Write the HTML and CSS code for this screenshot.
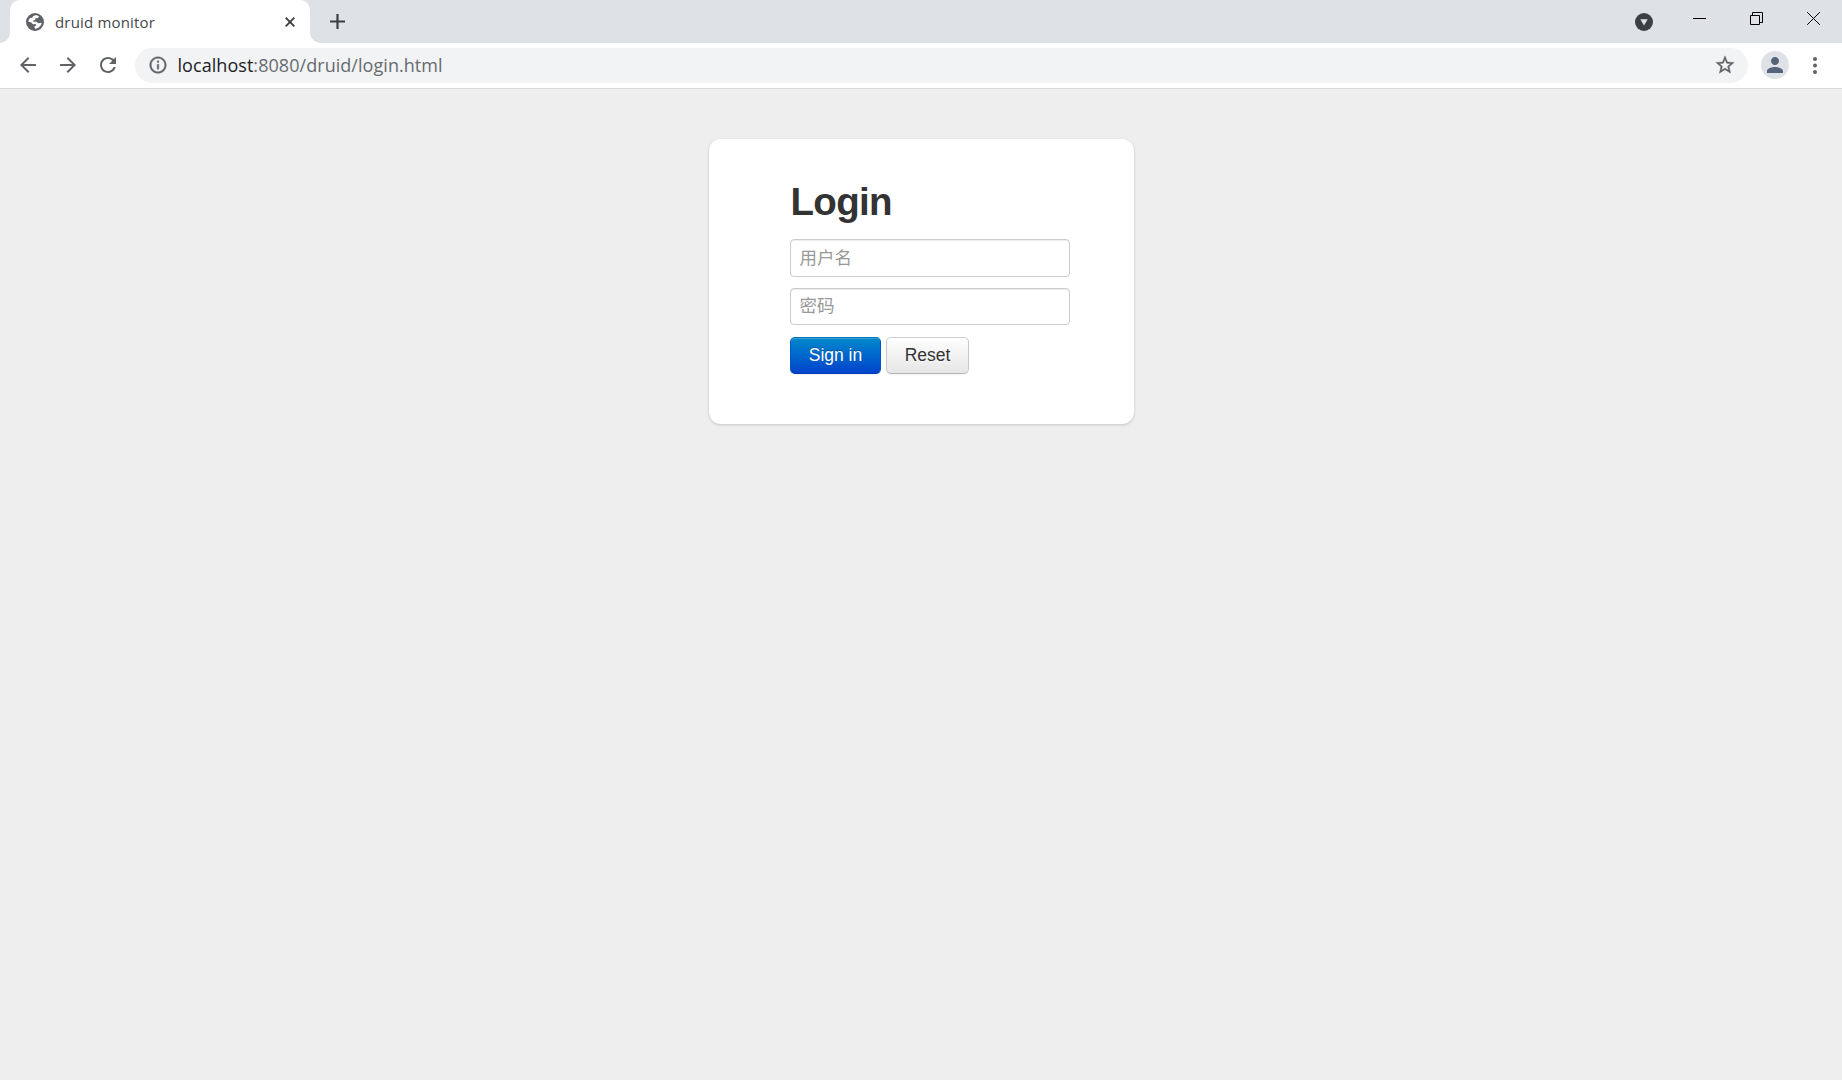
FILE: index.html
```
<!DOCTYPE html>
<html lang="zh-CN">
<head>
    <meta charset="UTF-8">
    <title>druid monitor</title>
    <link rel="stylesheet" href="styles.css">
</head>
<body>
    <div class="tab-strip">
        <div class="tab">
            <svg class="favicon" viewBox="0 0 18 18">
                <circle cx="9" cy="9" r="9" fill="#5f6368"/>
                <path d="M9.500 2.300C11 2.300 12.300 2.800 13 3.500L11.800 5 9.500 5.300 9.200 7 7.300 7.600 7.500 8.800 10.500 8.800 12.300 10.200 15.600 9.800C15.200 13 12.500 15.500 9.400 15.800L8.500 15 8.700 13.200 10.300 12.200 9.500 11 7 11.200 5 9.300 2.300 8.700C2.500 7 3.300 5.800 4.200 4.900L6.200 4.800 7.300 3Z" fill="#fff"/>
            </svg>
            <span class="tab-title">druid monitor</span>
            <svg class="tab-close" viewBox="0 0 10 10"><path d="M.7.7l8.600 8.600M9.300.7L.7 9.300"/></svg>
        </div>
        <svg class="new-tab" viewBox="0 0 15 15"><path d="M7.500 0v15M0 7.500h15"/></svg>
        <div class="window-controls">
            <svg class="tab-search" viewBox="0 0 18 18"><circle cx="9" cy="9" r="9" fill="#3c4043"/><path d="M5.300 6.300h7.400L9 12.500z" fill="#dee1e6"/></svg>
            <svg class="win-icon minimize" viewBox="0 0 13 13"><path d="M0 6.500h13"/></svg>
            <svg class="win-icon restore" viewBox="0 0 13 13"><path d="M.5 3.500h9v9h-9zM2.500 3.500v-3h10v10h-3"/></svg>
            <svg class="win-icon close" viewBox="0 0 13 13"><path d="M.2.2l12.600 12.600M12.800.2L.2 12.800"/></svg>
        </div>
    </div>

    <div class="toolbar">
        <svg class="nav-icon" viewBox="0 0 24 24"><path d="M20 11H7.830l5.590-5.590L12 4l-8 8 8 8 1.410-1.410L7.830 13H20v-2z"/></svg>
        <svg class="nav-icon" viewBox="0 0 24 24"><path d="M12 4l-1.410 1.410L16.170 11H4v2h12.170l-5.580 5.590L12 20l8-8z"/></svg>
        <svg class="nav-icon" viewBox="0 0 24 24"><path d="M17.650 6.350C16.200 4.900 14.210 4 12 4c-4.420 0-7.990 3.580-7.990 8s3.570 8 7.990 8c3.730 0 6.840-2.550 7.730-6h-2.080c-.82 2.330-3.040 4-5.650 4-3.310 0-6-2.690-6-6s2.690-6 6-6c1.660 0 3.140.69 4.220 1.780L13 11h7V4l-2.350 2.350z"/></svg>
        <div class="address-bar">
            <svg class="info-icon" viewBox="0 0 24 24"><path d="M11 7h2v2h-2zm0 4h2v6h-2zm1-9C6.480 2 2 6.480 2 12s4.480 10 10 10 10-4.480 10-10S17.520 2 12 2zm0 18c-4.410 0-8-3.590-8-8s3.590-8 8-8 8 3.590 8 8-3.590 8-8 8z"/></svg>
            <span class="url"><span class="host">localhost</span>:8080/druid/login.html</span>
            <svg class="star" viewBox="0 0 24 24"><path d="M22 9.240l-7.190-.62L12 2 9.190 8.630 2 9.240l5.460 4.730L5.820 21 12 17.270 18.180 21l-1.630-7.030L22 9.240zM12 15.400l-3.760 2.270 1-4.280-3.320-2.880 4.380-.38L12 6.100l1.710 4.040 4.380.38-3.320 2.880 1 4.280L12 15.400z"/></svg>
        </div>
        <div class="avatar">
            <svg viewBox="0 0 24 24"><path d="M12 12c2.210 0 4-1.790 4-4s-1.790-4-4-4-4 1.790-4 4 1.790 4 4 4zm0 2c-2.670 0-8 1.340-8 4v2h16v-2c0-2.660-5.330-4-8-4z"/></svg>
        </div>
        <svg class="menu" viewBox="0 0 4 17"><circle cx="2" cy="2" r="2"/><circle cx="2" cy="8.500" r="2"/><circle cx="2" cy="15" r="2"/></svg>
    </div>

    <div class="container">
        <form class="form-signin">
            <h2>Login</h2>
            <input type="text" class="username" placeholder="用户名">
            <input type="password" placeholder="密码">
            <div class="actions">
                <button type="button" class="btn btn-primary">Sign in</button>
                <button type="reset" class="btn">Reset</button>
            </div>
        </form>
    </div>
</body>
</html>
```
FILE: styles.css
```
* {
    box-sizing: border-box;
}
body {
    margin: 0;
    height: 100vh;
    overflow: hidden;
    background-color: #eee;
    font-family: "Liberation Sans", "Noto Sans CJK SC", sans-serif;
}
svg {
    display: block;
    flex: none;
}

/* tab strip */
.tab-strip {
    display: flex;
    height: 43px;
    padding-left: 10px;
    background-color: #dee1e6;
}
.tab {
    position: relative;
    display: flex;
    align-items: center;
    width: 300px;
    padding: 0 15px 0 16px;
    background-color: #fff;
    border-radius: 10px 10px 0 0;
}
.tab::before,
.tab::after {
    content: "";
    position: absolute;
    bottom: 0;
    width: 10px;
    height: 10px;
}
.tab::before {
    left: -10px;
    background: radial-gradient(circle at 0 0, #dee1e6 9.5px, #fff 10px);
}
.tab::after {
    right: -10px;
    background: radial-gradient(circle at 100% 0, #dee1e6 9.5px, #fff 10px);
}
.favicon {
    width: 18px;
    height: 18px;
}
.tab-title {
    flex: 1;
    margin: 1px 0 0 11px;
    font-family: "Open Sans", sans-serif;
    font-size: 15px;
    letter-spacing: .18px;
    color: #45484c;
}
.tab-close {
    width: 10px;
    height: 10px;
    stroke: #3c4043;
    stroke-width: 1.9;
}
.new-tab {
    width: 15px;
    height: 15px;
    margin: 14px 0 0 20px;
    stroke: #3c4043;
    stroke-width: 2.2;
}
.window-controls {
    display: flex;
    margin-left: auto;
    padding-right: 22px;
}
.tab-search {
    width: 18px;
    height: 18px;
    margin: 13px 40px 0 0;
}
.win-icon {
    width: 13px;
    height: 13px;
    margin-top: 12px;
    fill: none;
    stroke: #000;
    stroke-width: 1;
}
.restore,
.close {
    margin-left: 44px;
}

/* toolbar */
.toolbar {
    display: flex;
    align-items: center;
    height: 46px;
    padding: 1px 25px 2px 15.5px;
    background-color: #fff;
    border-bottom: 1px solid #d8d9db;
}
.nav-icon {
    width: 24px;
    height: 24px;
    margin-right: 16px;
    fill: #5f6368;
}
.address-bar {
    display: flex;
    flex: 1;
    align-items: center;
    height: 35px;
    margin-left: -.5px;
    padding: 0 12px;
    background-color: #f1f3f4;
    border-radius: 18px;
}
.info-icon {
    width: 20px;
    height: 20px;
    margin-left: .5px;
    fill: #5f6368;
    stroke: #5f6368;
    stroke-width: .4;
}
.url {
    flex: 1;
    margin-left: 10px;
    font-family: "Open Sans", sans-serif;
    font-size: 18px;
    letter-spacing: .05px;
    color: #686b6f;
}
.host {
    color: #202124;
}
.star {
    width: 22px;
    height: 22px;
    fill: #5f6368;
    stroke: #5f6368;
    stroke-width: .4;
}
.avatar {
    display: flex;
    align-items: center;
    justify-content: center;
    width: 28px;
    height: 28px;
    margin: 0 24px 0 13px;
    background-color: #dee1e6;
    border-radius: 50%;
}
.avatar svg {
    width: 24px;
    height: 24px;
    fill: #54627a;
}
.menu {
    width: 4px;
    height: 17px;
    fill: #5f6368;
}

/* login form */
.container {
    padding-top: 50px;
}
.form-signin {
    width: 425px;
    height: 285px;
    margin: 0 auto;
    padding: 38px 64px 0 81px;
    background-color: #fff;
    border-radius: 12px;
    box-shadow: 0 1px 3px rgba(0, 0, 0, .18);
}
.form-signin h2 {
    margin: 0 0 12px;
    font-size: 38.5px;
    line-height: 50px;
    letter-spacing: -.7px;
    text-indent: 1px;
    color: #333;
}
.form-signin input {
    display: block;
    width: 280px;
    height: 37px;
    margin-bottom: 12px;
    padding: 0 8px 0 9px;
    border: 1px solid #ccc;
    border-radius: 4px;
    box-shadow: inset 0 1px 1px rgba(0, 0, 0, .075);
    font-family: inherit;
    font-size: 17.5px;
}
.form-signin .username {
    height: 38px;
    margin-bottom: 11px;
}
.form-signin input::placeholder {
    color: #999;
}
.actions {
    display: flex;
    gap: 5px;
}
.btn {
    width: 83px;
    height: 37px;
    padding: 0 0 0 1px;
    border: 1px solid #ccc;
    border-color: #d0d0d0 #c8c8c8 #b3b3b3;
    border-radius: 5px;
    background: linear-gradient(#fff, #e6e6e6);
    box-shadow: inset 0 1px 0 rgba(255, 255, 255, .2), 0 1px 2px rgba(0, 0, 0, .05);
    font-family: inherit;
    font-size: 17.5px;
    color: #333;
    text-shadow: 0 1px 1px rgba(255, 255, 255, .75);
}
.btn-primary {
    width: 91px;
    border-color: #0074b4 #0055bf #003ab3;
    background: linear-gradient(#08c, #04c);
    color: #fff;
    text-shadow: 0 -1px 0 rgba(0, 0, 0, .25);
}
```
